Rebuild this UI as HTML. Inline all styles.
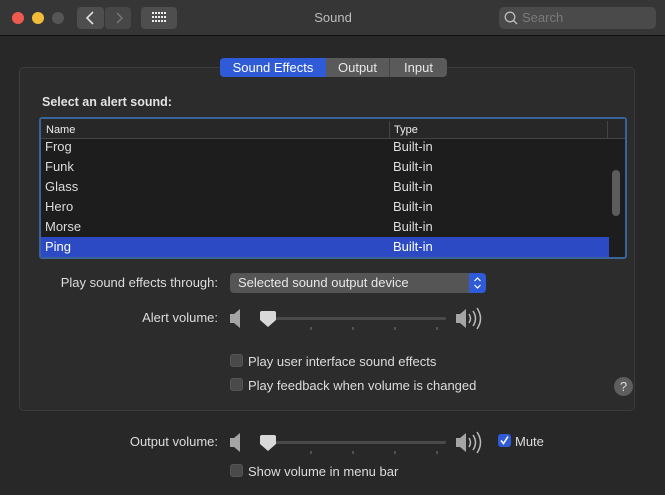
<!DOCTYPE html>
<html><head><style>
*{margin:0;padding:0;box-sizing:border-box}
body{width:665px;height:495px;background:#282828;font-family:"Liberation Sans",sans-serif;font-size:13px;color:#dcdcdc;position:relative;overflow:hidden}
.a{position:absolute}
.tb{left:0;top:0;width:665px;height:36px;background:#363636;border-bottom:1px solid #111}
.dot{width:12px;height:12px;border-radius:50%;top:12px}
.btn{background:#4e4e4e;border-radius:4px;top:7px;height:22px}
.lbl{text-align:right;width:218px;left:0}
.cb{width:13px;height:13px;border-radius:3px;background:#4a4a4a;border:1px solid #555}
.row{left:41px;width:568px;height:20px;line-height:20px}
.row span{position:absolute;left:4px}
.row b{position:absolute;left:352px;font-weight:normal}
</style></head><body>
<div class="a tb"></div>
<div class="a dot" style="left:12px;background:#ee5a50"></div>
<div class="a dot" style="left:32px;background:#f2bb3a"></div>
<div class="a dot" style="left:52px;background:#565656"></div>
<div class="a btn" style="left:77px;width:27px"></div>
<div class="a btn" style="left:105px;width:26px;background:#474747"></div>
<svg class="a" style="left:77px;top:7px" width="54" height="22"><path d="M16 5 L10 11 L16 17" stroke="#e0e0e0" stroke-width="1.6" fill="none"/><path d="M40 6 L45 11 L40 16" stroke="#777" stroke-width="1.4" fill="none"/></svg>
<div class="a btn" style="left:141px;width:36px"></div>
<svg class="a" style="left:152px;top:12px" width="14" height="12" fill="#eee"><g><rect x="0" y="0" width="2" height="2"/><rect x="3" y="0" width="2" height="2"/><rect x="6" y="0" width="2" height="2"/><rect x="9" y="0" width="2" height="2"/><rect x="12" y="0" width="2" height="2"/></g><g transform="translate(0,4)"><rect x="0" y="0" width="2" height="2"/><rect x="3" y="0" width="2" height="2"/><rect x="6" y="0" width="2" height="2"/><rect x="9" y="0" width="2" height="2"/><rect x="12" y="0" width="2" height="2"/></g><g transform="translate(0,8)"><rect x="0" y="0" width="2" height="2"/><rect x="3" y="0" width="2" height="2"/><rect x="6" y="0" width="2" height="2"/><rect x="9" y="0" width="2" height="2"/><rect x="12" y="0" width="2" height="2"/></g></svg>
<div class="a" style="left:290px;top:10px;width:86px;text-align:center;color:#bdbdbd">Sound</div>
<div class="a" style="left:499px;top:7px;width:157px;height:22px;background:#4a4a4a;border-radius:5px"></div>
<svg class="a" style="left:503px;top:10px" width="16" height="16"><circle cx="7" cy="7" r="4.8" stroke="#bbb" stroke-width="1.3" fill="none"/><path d="M10.5 10.5 L14 14" stroke="#bbb" stroke-width="1.4"/></svg>
<div class="a" style="left:522px;top:10px;color:#7a7a7a;font-size:13px">Search</div>

<div class="a" style="left:19px;top:67px;width:616px;height:344px;background:#2c2c2c;border:1px solid #3c3c3c;border-radius:5px"></div>
<div class="a" style="left:220px;top:58px;width:227px;height:19px;background:#5a5a5a;border-radius:4px"></div>
<div class="a" style="left:220px;top:58px;width:106px;height:19px;background:#2f5bd8;border-radius:4px 0 0 4px;color:#fff;text-align:center;line-height:19px">Sound Effects</div>
<div class="a" style="left:326px;top:58px;width:64px;height:19px;color:#e8e8e8;text-align:center;line-height:19px;border-right:1px solid #444">Output</div>
<div class="a" style="left:390px;top:58px;width:57px;height:19px;color:#e8e8e8;text-align:center;line-height:19px">Input</div>

<div class="a" style="left:42px;top:95px;font-weight:bold;font-size:12.5px;color:#e2e2e2">Select an alert sound:</div>
<div class="a" style="left:39px;top:117px;width:588px;height:142px;border:2px solid #3a6399;border-radius:3px;background:#1d1d1d"></div>
<div class="a" style="left:41px;top:119px;width:584px;height:20px;background:#272727;border-bottom:1px solid #444"></div>
<div class="a" style="left:389px;top:121px;width:1px;height:17px;background:#444"></div>
<div class="a" style="left:607px;top:121px;width:1px;height:17px;background:#444"></div>
<div class="a" style="left:46px;top:124px;font-size:11px;color:#eee">Name</div>
<div class="a" style="left:394px;top:124px;font-size:11px;color:#eee">Type</div>
<div class="a" style="left:41px;top:140px;width:568px;height:117px;overflow:hidden">
<div class="a row" style="left:0;top:-3px"><span>Frog</span><b>Built-in</b></div>
<div class="a row" style="left:0;top:17px"><span>Funk</span><b>Built-in</b></div>
<div class="a row" style="left:0;top:37px"><span>Glass</span><b>Built-in</b></div>
<div class="a row" style="left:0;top:57px"><span>Hero</span><b>Built-in</b></div>
<div class="a row" style="left:0;top:77px"><span>Morse</span><b>Built-in</b></div>
<div class="a row" style="left:0;top:97px;background:#2c4ac4;color:#fff"><span>Ping</span><b>Built-in</b></div>
</div>
<div class="a" style="left:612px;top:170px;width:8px;height:46px;background:#5c5c5c;border-radius:4px"></div>

<div class="a lbl" style="top:275px">Play sound effects through:</div>
<div class="a" style="left:230px;top:273px;width:256px;height:20px;background:#555;border-radius:4px;padding-left:8px;line-height:20px;color:#e8e8e8">Selected sound output device</div>
<div class="a" style="left:469px;top:273px;width:17px;height:20px;background:#2f5bd8;border-radius:0 4px 4px 0"></div>
<svg class="a" style="left:469px;top:273px" width="17" height="20"><path d="M5.5 8 L8.5 5 L11.5 8 M5.5 12 L8.5 15 L11.5 12" stroke="#fff" stroke-width="1.2" fill="none"/></svg>

<div class="a lbl" style="top:310px">Alert volume:</div>
<div class="a lbl" style="top:434px">Output volume:</div>

<svg class="a" style="left:226px;top:304px" width="270" height="30">
<path d="M4 10 H8 L14 5 V24 L8 19 H4Z" fill="#a5a5a5"/>
<rect x="42" y="13" width="178" height="3" rx="1.5" fill="#4a4a4a"/>
<path d="M36 7 h12 a2 2 0 0 1 2 2 v7 l-8 7 l-8 -7 v-7 a2 2 0 0 1 2 -2z" fill="#d8d8d8"/>
<g stroke="#777"><path d="M85 23v3M127 23v3M169 23v3M211 23v3"/></g>
<path d="M230 10 H234 L240 5 V24 L234 19 H230Z" fill="#a5a5a5"/>
<path d="M243 10 q3 4.5 0 9 M247 7 q5 7.5 0 15 M251 4 q7 10.5 0 21" stroke="#bbb" stroke-width="1.5" fill="none"/>
</svg>
<svg class="a" style="left:226px;top:428px" width="270" height="30">
<path d="M4 10 H8 L14 5 V24 L8 19 H4Z" fill="#a5a5a5"/>
<rect x="42" y="13" width="178" height="3" rx="1.5" fill="#4a4a4a"/>
<path d="M36 7 h12 a2 2 0 0 1 2 2 v7 l-8 7 l-8 -7 v-7 a2 2 0 0 1 2 -2z" fill="#d8d8d8"/>
<g stroke="#777"><path d="M85 23v3M127 23v3M169 23v3M211 23v3"/></g>
<path d="M230 10 H234 L240 5 V24 L234 19 H230Z" fill="#a5a5a5"/>
<path d="M243 10 q3 4.5 0 9 M247 7 q5 7.5 0 15 M251 4 q7 10.5 0 21" stroke="#bbb" stroke-width="1.5" fill="none"/>
</svg>

<div class="a cb" style="left:230px;top:354px"></div>
<div class="a" style="left:248px;top:354px">Play user interface sound effects</div>
<div class="a cb" style="left:230px;top:378px"></div>
<div class="a" style="left:248px;top:378px">Play feedback when volume is changed</div>
<div class="a" style="left:614px;top:377px;width:19px;height:19px;border-radius:50%;background:#5e5e5e;color:#ddd;text-align:center;line-height:19px;font-size:13px">?</div>

<div class="a cb" style="left:498px;top:434px;background:#2f5bd8;border-color:#2f5bd8"></div>
<svg class="a" style="left:498px;top:434px" width="13" height="13"><path d="M3 6.5 L5.5 9.5 L10 2.5" stroke="#fff" stroke-width="1.6" fill="none"/></svg>
<div class="a" style="left:515px;top:434px">Mute</div>
<div class="a cb" style="left:230px;top:464px"></div>
<div class="a" style="left:248px;top:464px">Show volume in menu bar</div>
</body></html>
